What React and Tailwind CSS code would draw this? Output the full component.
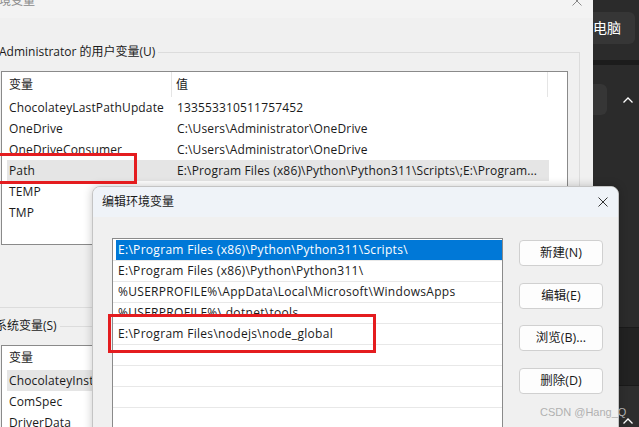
import React from 'react';

const userRows = [
  ['ChocolateyLastPathUpdate', '133553310511757452'],
  ['OneDrive', 'C:\\Users\\Administrator\\OneDrive'],
  ['OneDriveConsumer', 'C:\\Users\\Administrator\\OneDrive'],
  ['Path', 'E:\\Program Files (x86)\\Python\\Python311\\Scripts\\;E:\\Program...'],
  ['TEMP', '%USERPROFILE%\\AppData\\Local\\Temp'],
  ['TMP', '%USERPROFILE%\\AppData\\Local\\Temp'],
];

const sysRows = [
  ['ChocolateyInstall', 'C:\\ProgramData\\chocolatey'],
  ['ComSpec', 'C:\\Windows\\system32\\cmd.exe'],
  ['DriverData', 'C:\\Windows\\System32\\Drivers\\DriverData'],
];

const pathRows = [
  'E:\\Program Files (x86)\\Python\\Python311\\Scripts\\',
  'E:\\Program Files (x86)\\Python\\Python311\\',
  '%USERPROFILE%\\AppData\\Local\\Microsoft\\WindowsApps',
  '%USERPROFILE%\\.dotnet\\tools',
  'E:\\Program Files\\nodejs\\node_global',
  '',
  '',
  '',
  '',
];

function XIcon({ className }) {
  return (
    <svg viewBox="0 0 10 10" className={className} fill="none" stroke="currentColor" strokeWidth="1">
      <path d="M0.5 0.5 L9.5 9.5 M9.5 0.5 L0.5 9.5" />
    </svg>
  );
}

function Chevron({ className }) {
  return (
    <svg viewBox="0 0 10 6" className={className} fill="none" stroke="currentColor" strokeWidth="1.3">
      <path d="M0.5 5.5 L5 1 L9.5 5.5" />
    </svg>
  );
}

function VarList({ rows, selected, headerClass, className }) {
  return (
    <div className={`border border-[#8a8a8a] bg-white overflow-hidden ${className}`}>
      <div className={`flex ${headerClass}`}>
        <div className="w-[170px] pl-[7px] flex items-center border-r border-[#e5e5e5]">变量</div>
        <div className="w-[376px] pl-[4px] flex items-center border-r border-[#e5e5e5]">值</div>
      </div>
      {rows.map(([name, value], i) => (
        <div
          key={name}
          className={`ml-[5px] w-[542px] h-[21px] flex items-center whitespace-nowrap tracking-[0.15px] ${i === selected ? 'bg-[#e5e5e5]' : ''}`}
        >
          <div className="w-[165px] pl-[2px] overflow-hidden">{name}</div>
          <div className="pl-[5px] overflow-hidden">{value}</div>
        </div>
      ))}
    </div>
  );
}

export default function App() {
  return (
    <div className="relative w-[639px] h-[427px] overflow-hidden flex text-[12px] leading-[16px] text-[#1a1a1a] font-['Open_Sans','Noto_Sans_CJK_SC',sans-serif]">
      {/* background window: 环境变量 */}
      <div className="w-[593px] shrink-0 bg-[#f0f0f0] flex flex-col">
        <div className="h-[18px] shrink-0 bg-[#f3f3f3] flex items-start justify-between">
          <span className="-ml-[13px] -mt-[7px] text-[#8a8a8a]">环境变量</span>
          <XIcon className="w-[10px] h-[10px] -mt-[4px] mr-[11px] text-[#8a8a8a]" />
        </div>

        <fieldset className="shrink-0 -ml-[3px] w-[583px] mt-[26px] pb-[62px] border border-[#dcdcdc]">
          <legend className="pl-[1px] pr-[3px]">Administrator 的用户变量(U)</legend>
          <VarList rows={userRows} selected={3} headerClass="h-[25px]" className="ml-[3px] mt-[11px] w-[567px] h-[174px]" />
        </fieldset>

        <fieldset className="shrink-0 -ml-[3px] w-[583px] mt-[10px] pb-[20px] border border-[#dcdcdc]">
          <legend className="-ml-[3px] pr-[3px]">系统变量(S)</legend>
          <VarList rows={sysRows} selected={0} headerClass="h-[24px]" className="ml-[3px] mt-[11px] w-[567px] h-[120px]" />
        </fieldset>
      </div>

      {/* dark panel on the right */}
      <div className="flex-1 flex flex-col bg-[#2b2b2b] text-white">
        <div className="h-[60px] shrink-0 pt-[12px]">
          <div className="h-[32px] w-[42px] rounded-r-[6px] bg-[#363636] flex items-center text-[14px]">电脑</div>
        </div>
        <div className="h-[5px] shrink-0 bg-[#1c1c1c]" />
        <div className="h-[262px] shrink-0 pt-[19px]">
          <div className="flex items-center h-[31px]">
            <div className="w-[14px] h-[31px] rounded-r-[6px] bg-[#363636]" />
            <Chevron className="ml-[16px] w-[10px] h-[6px]" />
          </div>
        </div>
        <div className="h-[58px] shrink-0 bg-[#222222] border-t border-[#1a1a1a]" />
        <div className="flex-1 bg-[#2e2e2e] border-t border-[#1a1a1a]">
          <Chevron className="ml-[30px] mt-[32px] w-[10px] h-[6px]" />
        </div>
      </div>

      {/* dialog: 编辑环境变量 */}
      <div className="absolute left-[92px] top-[186px] w-[527px] h-[260px] rounded-t-[8px] border border-[#c4c4c4] bg-[#f0f0f0] shadow-[0_0_10px_rgba(0,0,0,0.22)] overflow-hidden">
        <div className="h-[30px] bg-[#eff3f8] flex items-center justify-between pl-[9px] pr-[10px]">
          <span>编辑环境变量</span>
          <XIcon className="w-[10px] h-[10px] text-[#333]" />
        </div>
        <div className="flex pl-[19px] pt-[21px] gap-[16px]">
          <div className="w-[391px] h-[220px] border border-[#8a8a8a] bg-white pt-[1px]">
            {pathRows.map((p, i) => (
              <div key={i} className="h-[21px] border-b border-[#e8e8e8] flex whitespace-nowrap">
                <div className={`ml-[3px] flex-1 pl-[2px] flex items-center tracking-[0.3px] ${i === 0 ? 'bg-[#0078d7] text-white' : ''}`}>{p}</div>
              </div>
            ))}
          </div>
          <div className="flex flex-col gap-[16.5px] pt-[2px]">
            {['新建(N)', '编辑(E)', '浏览(B)...', '删除(D)'].map((b) => (
              <div key={b} className="w-[84px] h-[26px] rounded-[4px] border border-[#d0d0d0] bg-[#fdfdfd] flex items-center justify-center text-[12.5px]">
                {b}
              </div>
            ))}
          </div>
        </div>
      </div>

      {/* red annotation boxes */}
      <div className="absolute left-[-4px] top-[153px] w-[141px] h-[31px] border-[3px] border-[#e41c1f]" />
      <div className="absolute left-[108px] top-[314px] w-[268px] h-[39px] border-[3px] border-[#e41c1f]" />

      <div className="absolute left-[540px] top-[404px] text-[11px] text-[#b0b0b0] font-['Liberation_Sans',sans-serif]">CSDN @Hang_Q</div>
    </div>
  );
}
